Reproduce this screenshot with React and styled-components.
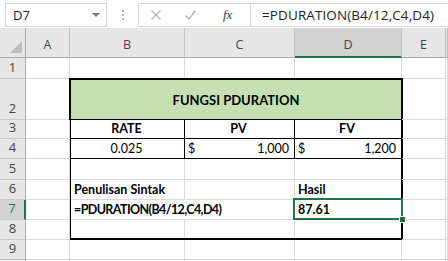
import React from "react";
import styled, { createGlobalStyle } from "styled-components";

const GlobalStyle = createGlobalStyle`
  html, body {
    margin: 0;
    padding: 0;
    background: #ffffff;
    overflow: hidden;
  }
  body {
    font-family: "Lato", "Liberation Sans", sans-serif;
  }
`;

const COLUMNS = ["A", "B", "C", "D", "E", ""];
const ROW_HEIGHTS = [21, 41, 19, 20, 21, 20, 20, 20, 20];

const Page = styled.div`
  width: 448px;
  height: 261px;
  overflow: hidden;
  display: flex;
  flex-direction: column;
`;

/* ---------- formula bar ---------- */

const Toolbar = styled.div`
  height: 28px;
  flex: none;
  display: flex;
  align-items: flex-start;
  padding-top: 3px;
  box-sizing: border-box;
  background: #ffffff;
`;

const NameBox = styled.div`
  width: 102px;
  height: 24px;
  margin-left: 5px;
  box-sizing: border-box;
  border: 1px solid #d6d6d6;
  display: flex;
  align-items: center;
  justify-content: space-between;
  padding: 0 6px 0 7px;
  font-family: "Open Sans", "Liberation Sans", sans-serif;
  font-size: 13px;
  color: #222;
`;

const Caret = styled.span`
  width: 0;
  height: 0;
  border-left: 4px solid transparent;
  border-right: 4px solid transparent;
  border-top: 4px solid #7a7a7a;
`;

const Grip = styled.div`
  width: 31px;
  height: 24px;
  display: flex;
  flex-direction: column;
  align-items: center;
  justify-content: center;
  gap: 2px;

  span {
    width: 2px;
    height: 2px;
    background: #b4b4b4;
  }
`;

const ActionBox = styled.div`
  width: 112px;
  height: 24px;
  box-sizing: border-box;
  border: 1px solid #d6d6d6;
  border-right: none;
  display: flex;
  align-items: center;
  padding-left: 11px;
  gap: 22px;
`;

const Fx = styled.span`
  font-family: "Liberation Serif", serif;
  font-style: italic;
  font-size: 13px;
  color: #333;
  margin-left: 4px;
`;

const FormulaBox = styled.div`
  flex: 1;
  height: 24px;
  box-sizing: border-box;
  border: 1px solid #d6d6d6;
  border-right: none;
  display: flex;
  align-items: center;
  padding-left: 11px;
  font-family: "Open Sans", "Liberation Sans", sans-serif;
  font-size: 13.5px;
  letter-spacing: 0.1px;
  color: #222;
  white-space: nowrap;
`;

/* ---------- sheet ---------- */

const Sheet = styled.div`
  flex: 1;
  display: grid;
  grid-template-columns: 26px 44px 115px 110px 107px 44px 1fr;
  grid-template-rows: 30px ${ROW_HEIGHTS.map((h) => h + "px").join(" ")} 1fr;
`;

const HeaderCell = styled.div`
  box-sizing: border-box;
  background: ${(p) => (p.$active ? "#d3d3d3" : "#e6e6e6")};
  border-right: 1px solid #c2c2c2;
  border-bottom: ${(p) => (p.$active ? "2px solid #217346" : "1px solid #ababab")};
  display: flex;
  align-items: flex-end;
  justify-content: center;
  padding-bottom: ${(p) => (p.$active ? "3px" : "4px")};
  font-family: "Open Sans", "Liberation Sans", sans-serif;
  font-size: 12.5px;
  color: #444;
`;

const Corner = styled.div`
  box-sizing: border-box;
  background: #e6e6e6;
  border-right: 1px solid #ababab;
  border-bottom: 1px solid #ababab;
  display: flex;
  align-items: flex-end;
  justify-content: flex-end;
  padding: 0 3px 4px 0;

  &::before {
    content: "";
    width: 0;
    height: 0;
    border-left: 12px solid transparent;
    border-bottom: 12px solid #bdbdbd;
  }
`;

const RowHeader = styled.div`
  box-sizing: border-box;
  background: ${(p) => (p.$active ? "#d3d3d3" : "#e6e6e6")};
  border-right: ${(p) => (p.$active ? "2px solid #217346" : "1px solid #ababab")};
  border-bottom: 1px solid #c8c8c8;
  display: flex;
  align-items: flex-end;
  justify-content: center;
  padding-bottom: 2px;
  font-family: "Open Sans", "Liberation Sans", sans-serif;
  font-size: 13px;
  color: ${(p) => (p.$active ? "#217346" : "#444")};
`;

const Cell = styled.div`
  box-sizing: border-box;
  border-right: 1px solid #d9d9d9;
  border-bottom: 1px solid #d9d9d9;
`;

/* ---------- data block ---------- */

const Block = styled.div`
  grid-column: 3 / 6;
  grid-row: 3 / 10;
  margin: -1px -1px 0 -1px;
  border: 2px solid #000;
  display: grid;
  grid-template-columns: 114px 110px 106px;
  grid-template-rows: 40px 19px 20px 21px 20px 20px 18px;
  font-size: 12.5px;
  color: #000;
`;

const Title = styled.div`
  grid-column: 1 / 4;
  background: #c6e0b4;
  border-bottom: 1px solid #000;
  display: flex;
  align-items: center;
  justify-content: center;
  font-weight: 700;
  font-size: 13px;
`;

const DataCell = styled.div`
  box-sizing: border-box;
  position: relative;
  grid-column: ${(p) => p.$span || "auto"};
  border-right: ${(p) => (p.$last ? "none" : `1px solid ${p.$line}`)};
  border-bottom: ${(p) => (p.$noBottom ? "none" : `1px solid ${p.$line}`)};
  display: flex;
  align-items: flex-end;
  justify-content: ${(p) => p.$justify || "flex-start"};
  padding: 0 5px 2px 3px;
  font-weight: ${(p) => (p.$bold ? 700 : 400)};
  letter-spacing: ${(p) => (p.$tight ? "-0.6px" : "normal")};
  white-space: nowrap;
`;

const Selection = styled.span`
  position: absolute;
  left: -2px;
  top: -2px;
  right: -2px;
  bottom: -1px;
  border: 2px solid #217346;
  pointer-events: none;
`;

const FillHandle = styled.span`
  position: absolute;
  right: -5px;
  bottom: -4px;
  width: 5px;
  height: 5px;
  background: #217346;
  border: 1px solid #fff;
`;

function XIcon() {
  return (
    <svg width="12" height="12" viewBox="0 0 12 12">
      <path d="M1.5 1.5 L10.5 10.5 M10.5 1.5 L1.5 10.5" stroke="#b5b5b5" strokeWidth="1.3" fill="none" />
    </svg>
  );
}

function CheckIcon() {
  return (
    <svg width="13" height="12" viewBox="0 0 13 12">
      <path d="M1.5 6.5 L5 10 L11.5 1.5" stroke="#b5b5b5" strokeWidth="1.3" fill="none" />
    </svg>
  );
}

function DataBlock() {
  const black = "#000";
  const grey = "#d9d9d9";
  return (
    <Block>
      <Title>FUNGSI PDURATION</Title>

      <DataCell $line={black} $bold $justify="center">RATE</DataCell>
      <DataCell $line={black} $bold $justify="center">PV</DataCell>
      <DataCell $line={black} $bold $justify="center" $last>FV</DataCell>

      <DataCell $line={black} $justify="center">0.025</DataCell>
      <DataCell $line={black} $justify="space-between">
        <span>$</span>
        <span>1,000</span>
      </DataCell>
      <DataCell $line={black} $justify="space-between" $last>
        <span>$</span>
        <span>1,200</span>
      </DataCell>

      <DataCell $line={grey} />
      <DataCell $line={grey} />
      <DataCell $line={grey} $last />

      <DataCell $line={grey} $bold>Penulisan Sintak</DataCell>
      <DataCell $line={grey} />
      <DataCell $line={grey} $bold $last>Hasil</DataCell>

      <DataCell $line={grey} $bold $tight $span="1 / 3">=PDURATION(B4/12,C4,D4)</DataCell>
      <DataCell $line={grey} $bold $last>
        87.61
        <Selection />
        <FillHandle />
      </DataCell>

      <DataCell $line={grey} $noBottom />
      <DataCell $line={grey} $noBottom />
      <DataCell $line={grey} $noBottom $last />
    </Block>
  );
}

export default function App() {
  const rows = ROW_HEIGHTS.map((_, i) => i + 1);
  return (
    <>
      <GlobalStyle />
      <Page>
        <Toolbar>
          <NameBox>
            D7
            <Caret />
          </NameBox>
          <Grip>
            <span />
            <span />
            <span />
          </Grip>
          <ActionBox>
            <XIcon />
            <CheckIcon />
            <Fx>fx</Fx>
          </ActionBox>
          <FormulaBox>=PDURATION(B4/12,C4,D4)</FormulaBox>
        </Toolbar>

        <Sheet>
          <Corner />
          {COLUMNS.map((c, i) => (
            <HeaderCell key={i} $active={c === "D"}>
              {c}
            </HeaderCell>
          ))}

          {rows.map((r) => {
            const inBlock = r >= 2 && r <= 8;
            return (
              <React.Fragment key={r}>
                <RowHeader $active={r === 7}>{r}</RowHeader>
                <Cell />
                {r === 2 && <DataBlock />}
                {!inBlock && (
                  <>
                    <Cell />
                    <Cell />
                    <Cell />
                  </>
                )}
                <Cell />
                <Cell />
              </React.Fragment>
            );
          })}

          <RowHeader />
          {COLUMNS.map((c, i) => (
            <Cell key={i} />
          ))}
        </Sheet>
      </Page>
    </>
  );
}
